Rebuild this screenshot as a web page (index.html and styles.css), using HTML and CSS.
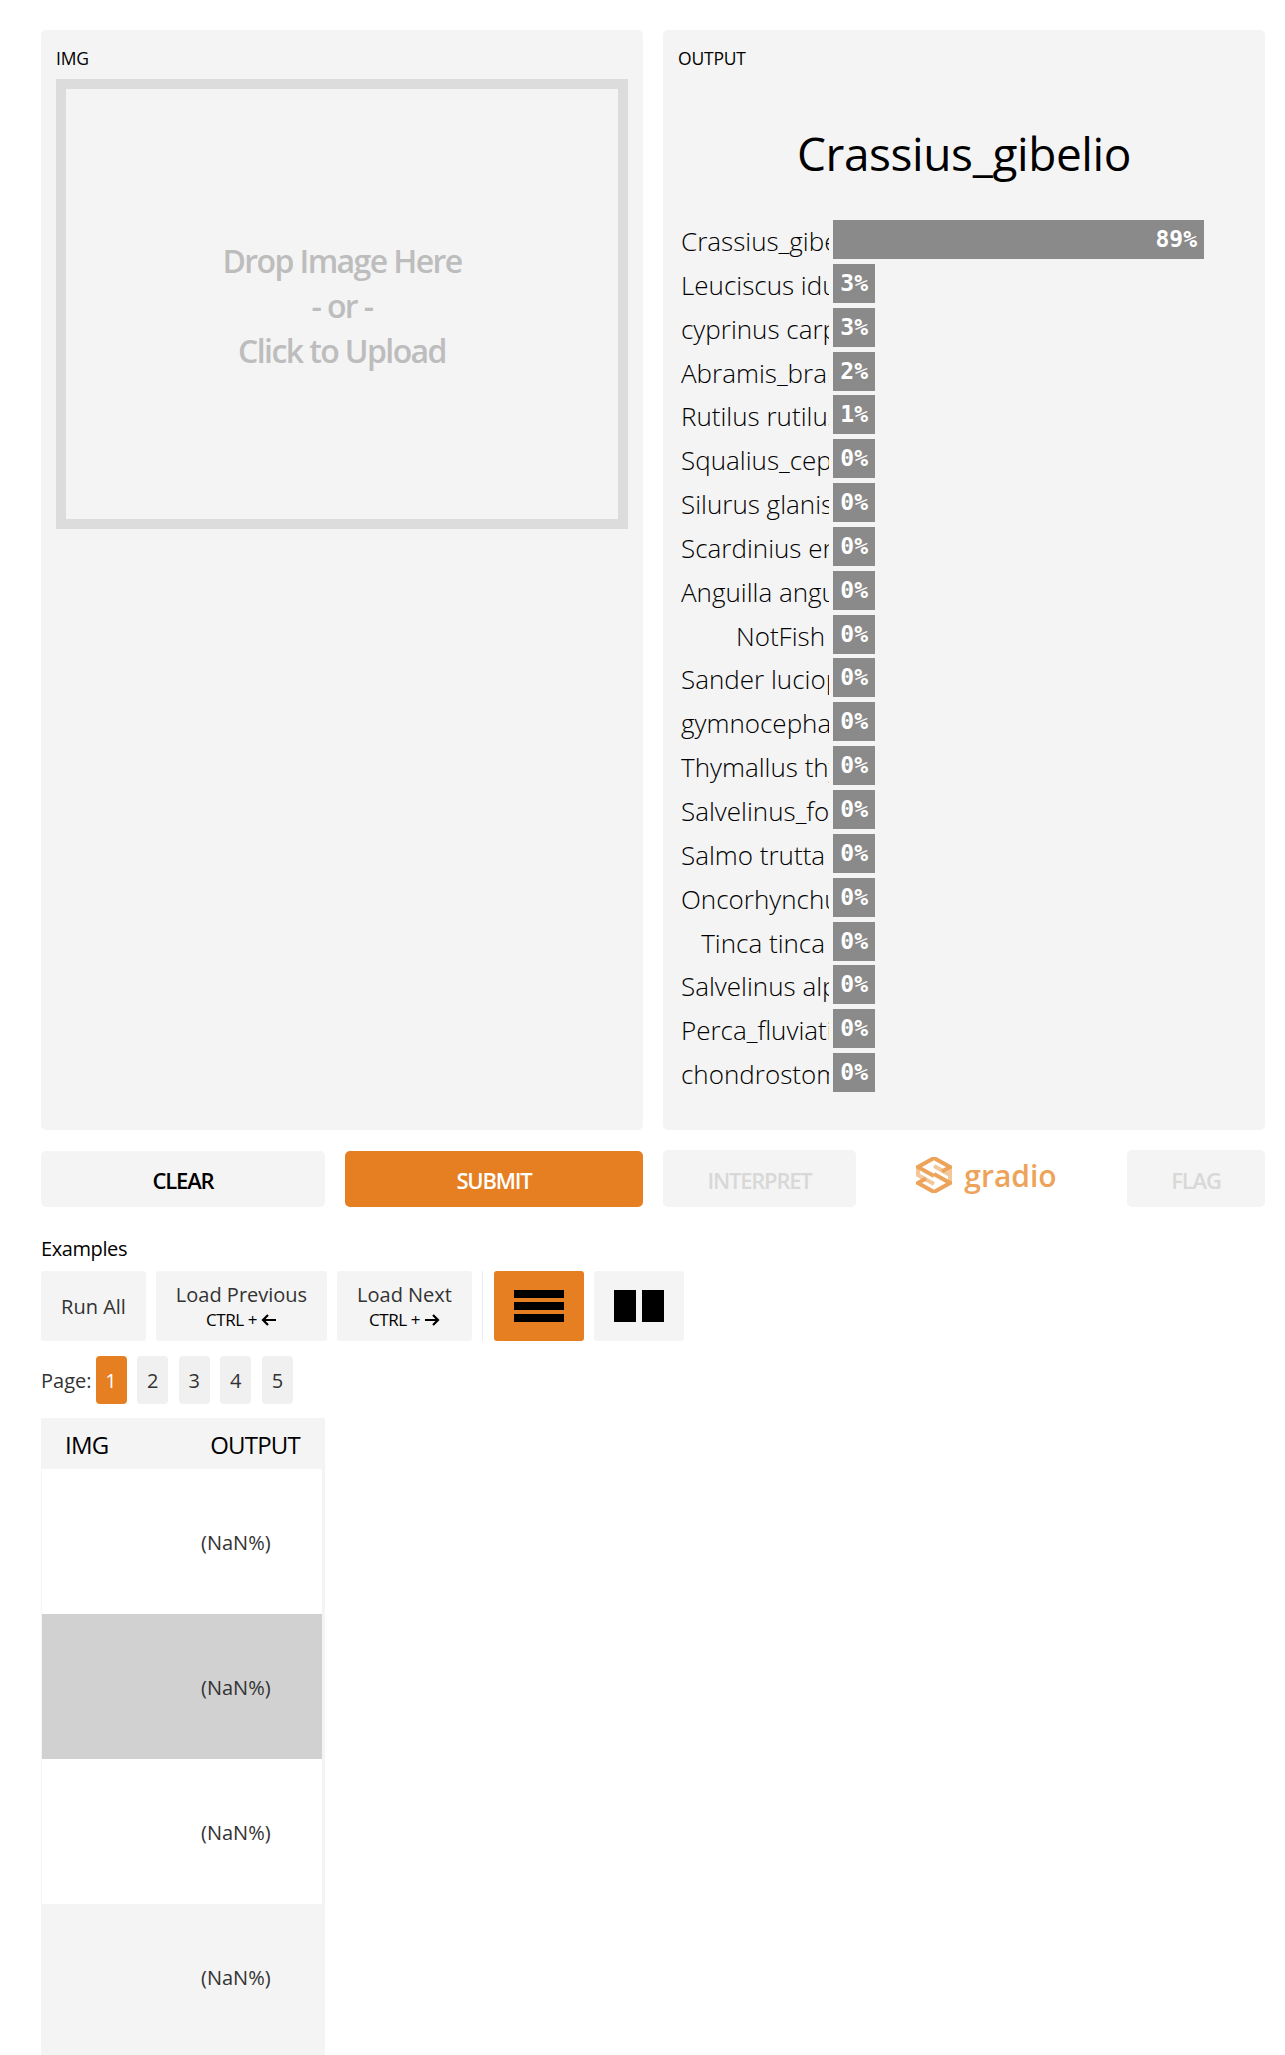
FILE: index.html
```html
<!DOCTYPE html>
<html lang="en">
<head>
    <meta charset="UTF-8">
    <title>Gradio</title>
    <link rel="stylesheet" href="styles.css">
</head>
<body>
    <div class="panels">
        <div class="col">
            <div class="panel input-panel">
                <div class="panel-label">IMG</div>
                <div class="drop">Drop Image Here<br>- or -<br>Click to Upload</div>
            </div>
            <div class="btn-row">
                <button class="btn clear">CLEAR</button>
                <button class="btn submit">SUBMIT</button>
            </div>
        </div>
        <div class="col">
            <div class="panel output-panel">
                <div class="panel-label">OUTPUT</div>
                <div class="title">Crassius_gibelio</div>
                <div class="bars" id="bars"></div>
            </div>
            <div class="btn-row">
                <button class="btn faded interpret">INTERPRET</button>
                <div class="logo">
                    <svg width="36" height="36" viewBox="1 1 36 36" fill="none" stroke-width="4" stroke-linejoin="miter">
                        <path stroke="#f2c79a" d="M3 11V19L19 28M35 19V27M35 11V19L19 10"/>
                        <path stroke="#eda35a" d="M27 15.5 35 11 19 2 3 11 19 20M11 22.5 3 27 19 36 35 27 19 18"/>
                    </svg>
                    <span>gradio</span>
                </div>
                <button class="btn faded flag">FLAG</button>
            </div>
        </div>
    </div>

    <div class="examples-title">Examples</div>
    <div class="tools">
        <button class="tool run">Run All</button>
        <button class="tool two prev">
            <span>Load Previous</span>
            <small>CTRL + <svg class="arrow" width="16" height="12" viewBox="0 0 16 12" fill="none" stroke="#000" stroke-width="2.2"><path d="M15 6H2M7 1 2 6 7 11"/></svg></small>
        </button>
        <button class="tool two next">
            <span>Load Next</span>
            <small>CTRL + <svg class="arrow" width="16" height="12" viewBox="0 0 16 12" fill="none" stroke="#000" stroke-width="2.2"><path d="M1 6H14M9 1 14 6 9 11"/></svg></small>
        </button>
        <div class="sep"></div>
        <button class="view active"><span class="lines"><i></i><i></i><i></i></span></button>
        <button class="view"><span class="cols"><i></i><i></i></span></button>
    </div>
    <div class="pages">
        <span>Page:</span>
        <button class="page active">1</button>
        <button class="page">2</button>
        <button class="page">3</button>
        <button class="page">4</button>
        <button class="page">5</button>
    </div>
    <div class="table">
        <div class="thead"><span>IMG</span><span>OUTPUT</span></div>
        <div class="tr">(NaN%)</div>
        <div class="tr hover">(NaN%)</div>
        <div class="tr">(NaN%)</div>
        <div class="tr alt">(NaN%)</div>
    </div>

    <script src="bars.js"></script>
</body>
</html>
```

FILE: styles.css
```css
body {
    margin: 0;
    padding: 30px 0 0 41px;
    height: 2055px;
    box-sizing: border-box;
    overflow: hidden;
    font-family: "Open Sans", sans-serif;
    background-color: #fff;
    color: #000;
}

button {
    font-family: inherit;
    border: none;
    padding: 0;
    cursor: pointer;
}

.panels {
    display: flex;
    gap: 20px;
    width: 1224px;
}

.col {
    flex: 1;
    min-width: 0;
}

.panel {
    background-color: #f4f4f4;
    height: 1100px;
    padding: 15px;
    box-sizing: border-box;
    border-radius: 5px;
}

.panel-label {
    font-size: 17.5px;
    line-height: 27px;
    letter-spacing: -0.2px;
    margin-bottom: 7px;
}

.drop {
    height: 450px;
    box-sizing: border-box;
    border: 10px solid #dcdcdc;
    text-align: center;
    color: #bdbdbd;
    font-size: 32px;
    font-weight: 600;
    line-height: 45px;
    letter-spacing: -1.6px;
    padding-top: 149px;
}

.title {
    text-align: center;
    font-size: 46px;
    font-weight: 500;
    line-height: 60px;
    letter-spacing: -0.4px;
    margin: 51px 0 37px;
}

.bar-row {
    display: flex;
    height: 39px;
    margin-bottom: 4.85px;
    padding-left: 3px;
}

.bar-name {
    width: 148px;
    box-sizing: border-box;
    padding-right: 4px;
    margin-right: 4px;
    font-size: 26px;
    font-weight: 300;
    line-height: 43px;
    overflow: hidden;
    white-space: nowrap;
    text-align: right;
}

.bar {
    background-color: #8a8a8a;
    color: #fff;
    font-family: "DejaVu Sans Mono", monospace;
    font-weight: 700;
    font-size: 23px;
    line-height: 38px;
    text-align: right;
    padding: 0 7px;
    box-sizing: border-box;
    min-width: 42px;
}

.btn-row {
    display: flex;
    gap: 20px;
    margin-top: 20px;
    align-items: stretch;
    height: 57px;
}

.btn {
    font-size: 22px;
    font-weight: 600;
    letter-spacing: -1.2px;
    padding-top: 2px;
    background-color: #f4f4f4;
    color: #000;
    border-radius: 5px;
}

.clear {
    width: 284px;
    margin-top: 1px;
}

.submit {
    flex: 1;
    margin-top: 1px;
    background-color: #e67e22;
    color: #fff;
}

.faded {
    color: #d8d8d8;
}

.interpret {
    width: 193px;
}

.flag {
    width: 138px;
}

.logo {
    flex: 1;
    display: flex;
    align-items: center;
    justify-content: center;
    gap: 12px;
    padding: 0 10px 7px 0;
    color: #eda35a;
    font-size: 30px;
    font-weight: 600;
}

.examples-title {
    font-size: 20px;
    line-height: 27px;
    letter-spacing: -0.4px;
    margin-top: 28px;
}

.tools {
    display: flex;
    margin-top: 9px;
    height: 70px;
    align-items: stretch;
}

.tool {
    background-color: #f4f4f4;
    font-size: 20px;
    color: #333;
    margin-right: 10px;
    border-radius: 3px;
}

.run {
    width: 105px;
}

.prev {
    width: 171px;
}

.next {
    width: 135px;
}

.tool.two {
    display: flex;
    flex-direction: column;
    align-items: center;
    justify-content: center;
    line-height: 30px;
    padding-bottom: 3px;
}

.tool small {
    display: flex;
    align-items: center;
    gap: 4px;
    font-size: 17px;
    font-weight: 500;
    color: #000;
    line-height: 20px;
    letter-spacing: -0.4px;
}

.sep {
    width: 1px;
    background-color: #ececec;
    margin-right: 11px;
}

.view {
    width: 90px;
    background-color: #f4f4f4;
    margin-right: 10px;
    display: flex;
    align-items: center;
    justify-content: center;
    border-radius: 3px;
}

.view.active {
    background-color: #e67e22;
}

.lines {
    display: flex;
    flex-direction: column;
    gap: 4px;
    width: 50px;
}

.lines i {
    height: 8px;
    background-color: #000;
}

.cols {
    display: flex;
    gap: 6px;
}

.cols i {
    width: 22px;
    height: 32px;
    background-color: #000;
}

.pages {
    display: flex;
    align-items: center;
    font-size: 20px;
    color: #333;
    margin-top: 15px;
    height: 48px;
}

.page {
    width: 31px;
    height: 48px;
    margin-left: 10.6px;
    font-size: 20px;
    color: #333;
    background-color: #f0f0f0;
    border-radius: 4px;
}

.pages span + .page {
    margin-left: 4px;
}

.page.active {
    background-color: #e67e22;
    color: #fff;
}

.table {
    width: 284px;
    margin-top: 14px;
    background-color: #f4f4f4;
    padding-bottom: 40px;
}

.thead {
    display: flex;
    justify-content: space-between;
    padding: 3px 25px 0 24px;
    font-size: 24px;
    line-height: 48px;
    letter-spacing: -0.8px;
}

.tr {
    height: 145px;
    margin: 0 3px 0 1px;
    background-color: #fff;
    font-size: 20px;
    color: #333;
    line-height: 147px;
    padding-left: 159px;
}

.tr.hover {
    background-color: #d1d1d1;
}

.tr.alt {
    background-color: #f4f4f4;
}
```

FILE: bars.js
```js
const rows = [
    ['Crassius_gibelio', 89],
    ['Leuciscus idus', 3],
    ['cyprinus carpio', 3],
    ['Abramis_brama', 2],
    ['Rutilus rutilus', 1],
    ['Squalius_cephalus', 0],
    ['Silurus glanis', 0],
    ['Scardinius erythrophthalmus', 0],
    ['Anguilla anguilla', 0],
    ['NotFish', 0],
    ['Sander lucioperca', 0],
    ['gymnocephalus', 0],
    ['Thymallus thymallus', 0],
    ['Salvelinus_fontinalis', 0],
    ['Salmo trutta', 0],
    ['Oncorhynchus mykiss', 0],
    ['Tinca tinca', 0],
    ['Salvelinus alpinus', 0],
    ['Perca_fluviatilis', 0],
    ['chondrostoma', 0]
];

const list = document.getElementById('bars');
rows.forEach(function (row) {
    const div = document.createElement('div');
    div.className = 'bar-row';
    const name = document.createElement('div');
    name.className = 'bar-name';
    name.textContent = row[0];
    const bar = document.createElement('div');
    bar.className = 'bar';
    bar.textContent = row[1] + '%';
    // only the top one is wider than its label
    if (row[1] > 10) bar.style.width = Math.round(row[1] * 4.17) + 'px';
    div.appendChild(name);
    div.appendChild(bar);
    list.appendChild(div);
});
```
